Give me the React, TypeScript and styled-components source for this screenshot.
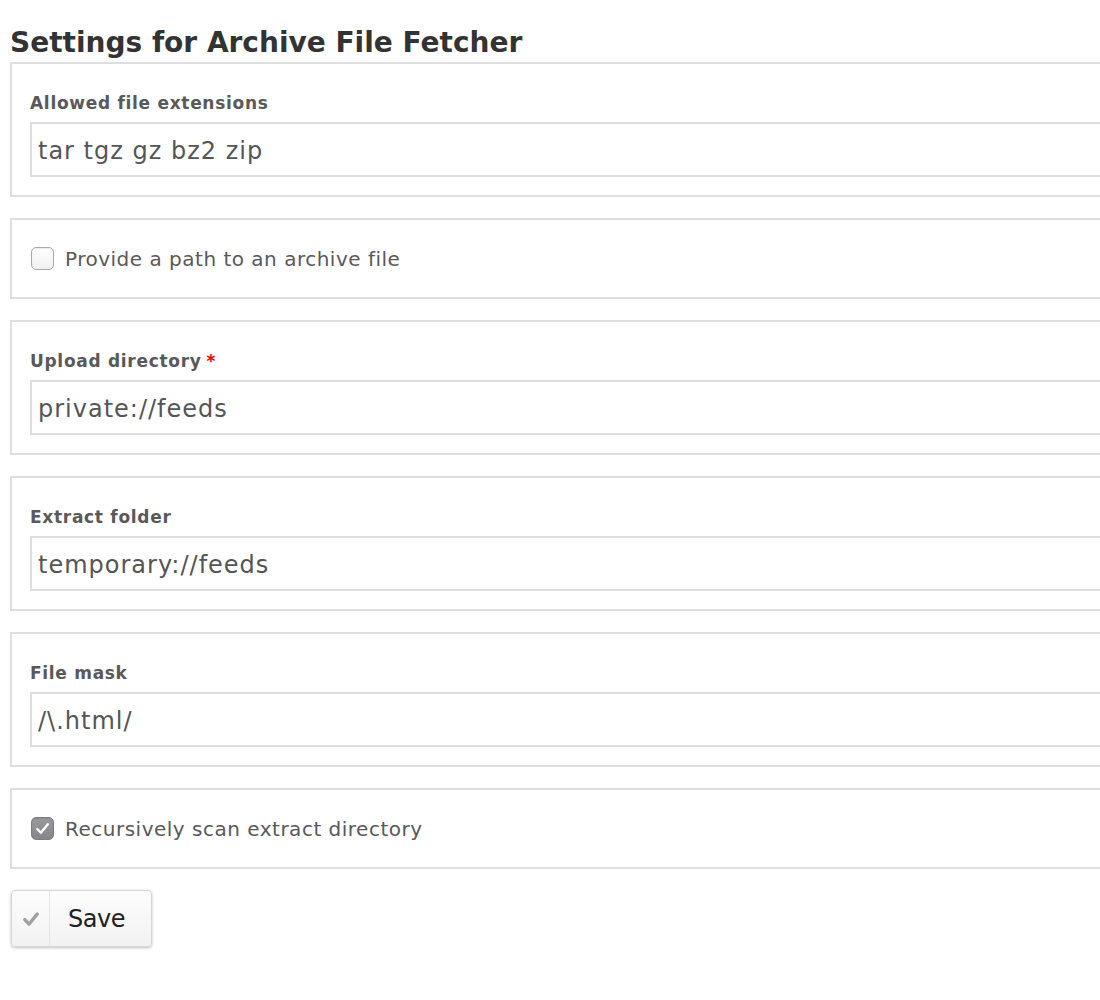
import React from "react";
import styled, { createGlobalStyle } from "styled-components";

const Global = createGlobalStyle`
  html, body { margin: 0; padding: 0; background: #fff; }
  body { overflow: hidden; font-family: "DejaVu Sans", "Liberation Sans", sans-serif; }
`;

const Page = styled.div`
  padding: 28px 0 40px 10px;
  width: 1130px;
`;

const Title = styled.h1`
  margin: 0 0 4px 0;
  font-size: 28px;
  line-height: 30px;
  font-weight: bold;
  color: #333;
`;

const Box = styled.div<{ $check?: boolean }>`
  border: 2px solid #dedede;
  padding: ${(p) => (p.$check ? "27px 18px 27px 19px" : "29px 18px 18px 18px")};
  margin-bottom: 21px;
  display: flex;
  flex-direction: column;
`;

const Label = styled.label`
  font-size: 17px;
  line-height: 20px;
  font-weight: bold;
  color: #595959;
  margin-bottom: 9px;
  letter-spacing: 0.7px;
`;

const Required = styled.span`
  color: #e00;
  margin-left: 5px;
`;

const Input = styled.input`
  box-sizing: border-box;
  height: 55px;
  border: 2px solid #dedede;
  padding: 3px 6px 0 6px;
  font-family: inherit;
  font-size: 24px;
  color: #555;
  outline: none;
  background: #fff;
  letter-spacing: 1px;
`;

const CheckRow = styled.label`
  display: flex;
  align-items: center;
  gap: 11px;
  font-size: 20px;
  line-height: 22px;
  color: #595959;
  letter-spacing: 0.5px;
`;

const CheckBox = styled.span<{ $checked?: boolean }>`
  box-sizing: border-box;
  width: 23px;
  height: 23px;
  border-radius: 5px;
  border: 1px solid ${(p) => (p.$checked ? "#7d7d82" : "#a9a9a9")};
  background: ${(p) =>
    p.$checked
      ? "linear-gradient(#98989d, #85858a)"
      : "linear-gradient(#ffffff, #f0f0f0)"};
  box-shadow: inset 0 1px 1px rgba(0, 0, 0, 0.08);
  display: flex;
  align-items: center;
  justify-content: center;
  flex-shrink: 0;
`;

const SaveButton = styled.button`
  display: flex;
  align-items: stretch;
  box-sizing: border-box;
  width: 141px;
  height: 57px;
  margin-left: 1px;
  padding: 0;
  border: 1px solid #d6d6d6;
  border-radius: 4px;
  background: linear-gradient(#fdfdfd, #f2f2f2);
  box-shadow: 0 1px 3px rgba(0, 0, 0, 0.25);
  font-family: inherit;
  cursor: pointer;
`;

const SaveIcon = styled.span`
  width: 37px;
  border-right: 1px solid #e6e6e6;
  display: flex;
  align-items: center;
  justify-content: center;
`;

const SaveText = styled.span`
  flex: 1;
  display: flex;
  align-items: center;
  justify-content: center;
  font-size: 24px;
  color: #222;
  padding-right: 8px;
  letter-spacing: -0.5px;
`;

const Check = ({ color, size, weight }: { color: string; size: number; weight: number }) => (
  <svg width={size} height={size} viewBox="0 0 16 16">
    <path
      d="M3 8.5 L6.5 12 L13 4"
      fill="none"
      stroke={color}
      strokeWidth={weight}
      strokeLinecap="round"
      strokeLinejoin="round"
    />
  </svg>
);

function Field({ label, value, required }: { label: string; value: string; required?: boolean }) {
  return (
    <Box>
      <Label>
        {label}
        {required && <Required>*</Required>}
      </Label>
      <Input defaultValue={value} />
    </Box>
  );
}

function CheckField({ label, checked }: { label: string; checked?: boolean }) {
  return (
    <Box $check>
      <CheckRow>
        <CheckBox $checked={checked}>{checked && <Check color="#fff" size={17} weight={2.2} />}</CheckBox>
        {label}
      </CheckRow>
    </Box>
  );
}

export default function App() {
  return (
    <>
      <Global />
      <Page>
        <Title>Settings for Archive File Fetcher</Title>
        <Field label="Allowed file extensions" value="tar tgz gz bz2 zip" />
        <CheckField label="Provide a path to an archive file" />
        <Field label="Upload directory" value="private://feeds" required />
        <Field label="Extract folder" value="temporary://feeds" />
        <Field label="File mask" value="/\.html/" />
        <CheckField label="Recursively scan extract directory" checked />
        <SaveButton>
          <SaveIcon>
            <Check color="#a0a0a0" size={20} weight={2.8} />
          </SaveIcon>
          <SaveText>Save</SaveText>
        </SaveButton>
      </Page>
    </>
  );
}
